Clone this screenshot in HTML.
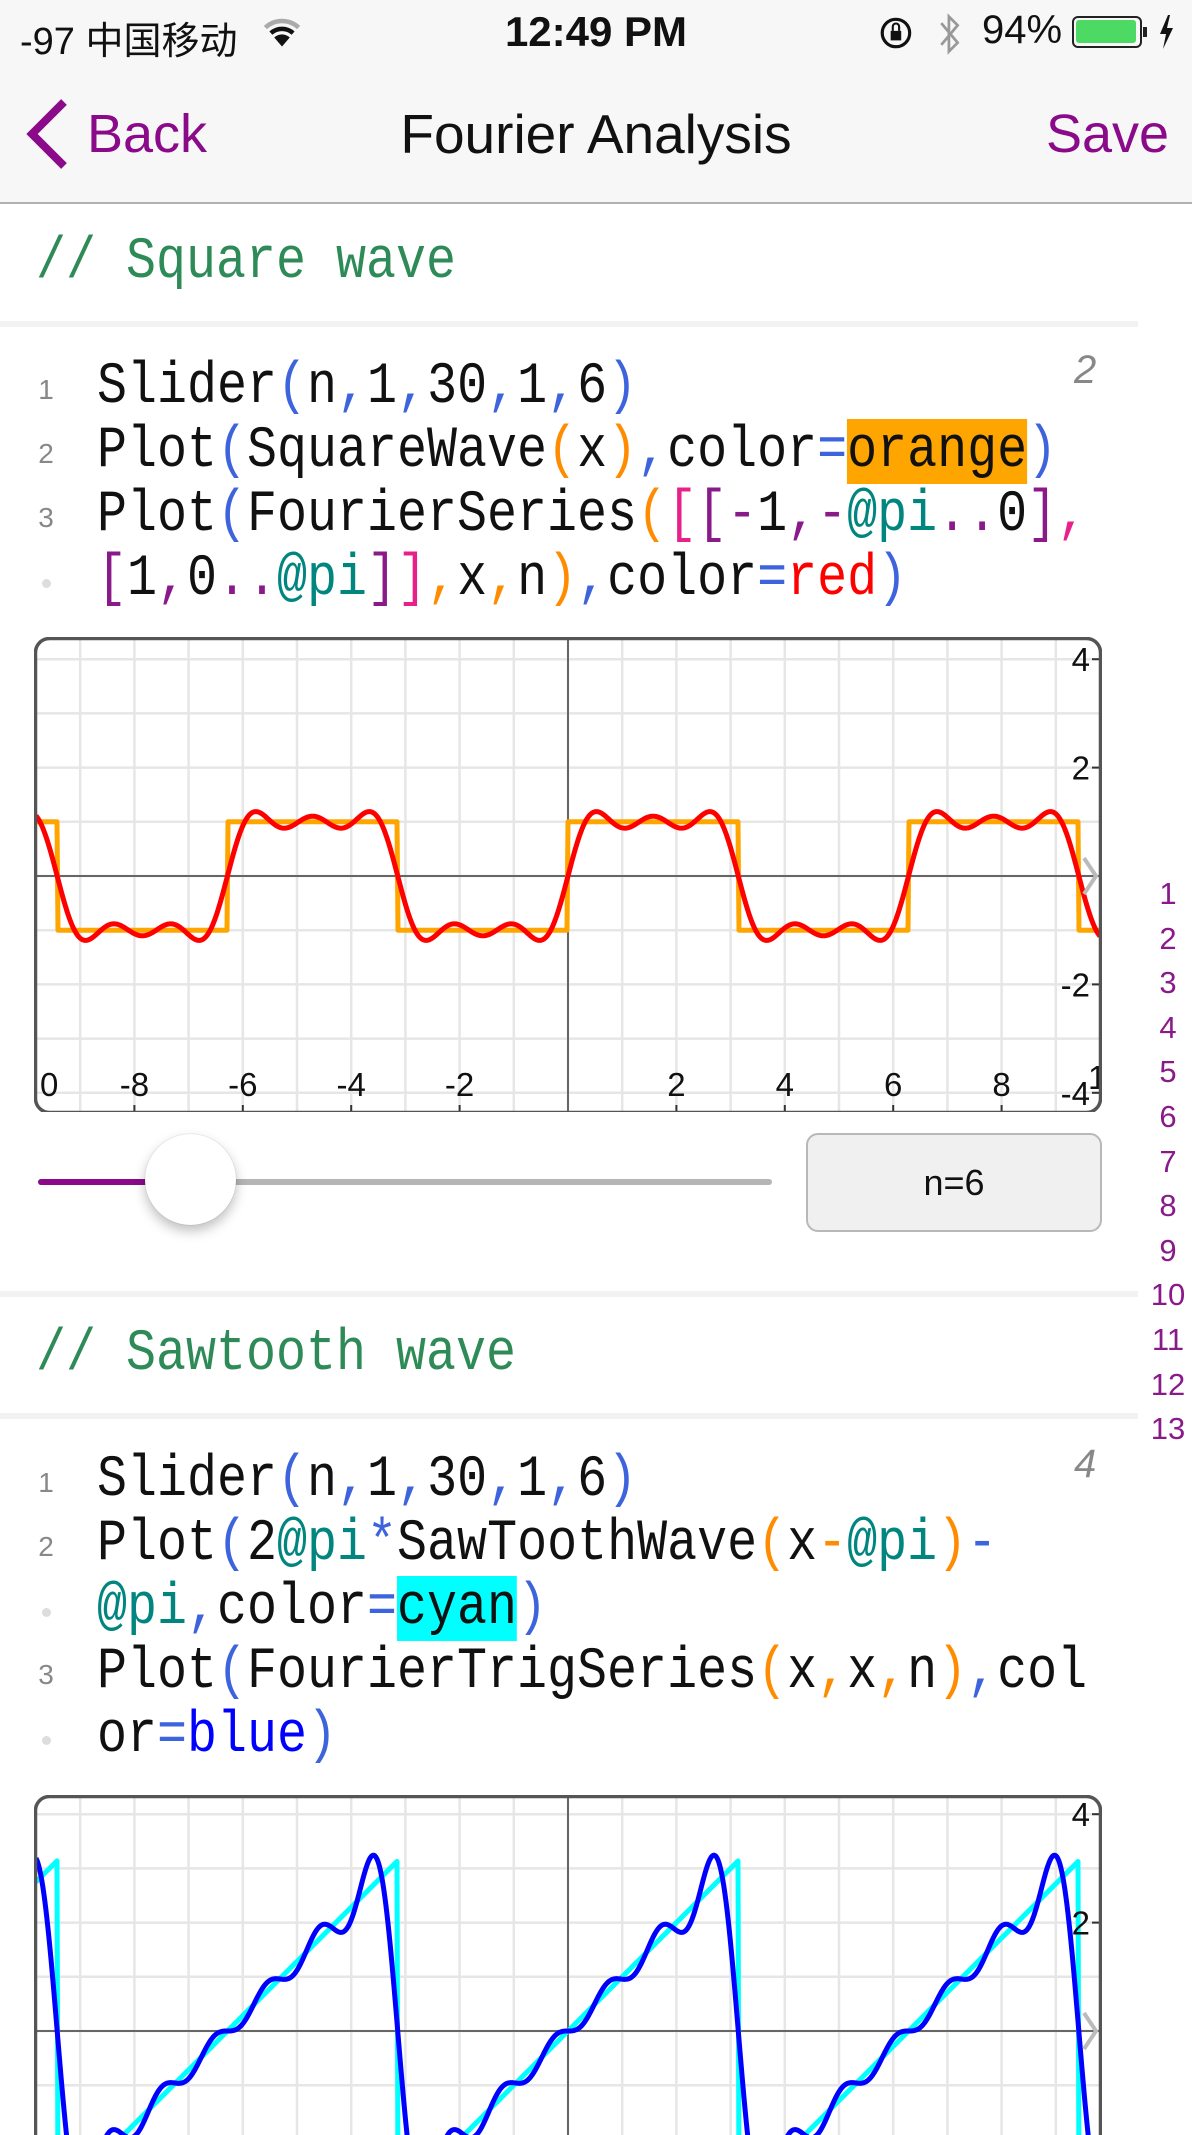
<!DOCTYPE html>
<html><head><meta charset="utf-8">
<style>
*{margin:0;padding:0;box-sizing:border-box}
body{width:1192px;height:2120px;overflow:hidden;background:#fff;position:relative;font-family:"Liberation Sans","Noto Sans CJK SC",sans-serif}
.abs{position:absolute}
.nav{position:absolute;left:0;top:0;width:1192px;height:204px;background:#f7f7f7;border-bottom:2px solid #b2b2b2}
.code{position:absolute;left:97px;font-family:"Liberation Mono",monospace;font-size:58px;line-height:64px;white-space:pre;color:#111;transform:scaleX(0.862);transform-origin:0 0}
.ln{position:absolute;left:36px;font-size:28px;color:#888;width:20px;text-align:center}
.dot{position:absolute;left:42px;width:9px;height:9px;border-radius:50%;background:#ddd}
.b{color:#3d64dc}.o{color:#ff8c00}.m{color:#e8208a}.p{color:#8a1a8a}.t{color:#00857f}.r{color:#ff0000}.bl{color:#0000ff}
.comment{position:absolute;left:36px;font-family:"Liberation Mono",monospace;font-size:58px;color:#2e8b57;white-space:pre;transform:scaleX(0.862);transform-origin:0 0}
.sep{position:absolute;left:0;width:1138px;height:6px;background:#f2f2f2}
.cellno{position:absolute;left:1074px;font-size:40px;font-style:italic;color:#888}
.side{position:absolute;left:1146px;width:44px;text-align:center;color:#8a1a8a;font-size:31px;line-height:44.6px}
</style></head><body>
<div class="nav">
 <div class="abs" style="left:20px;top:10px;font-size:38px;color:#111">-97 中国移动</div>
 <svg class="abs" style="left:262px;top:16px" width="40" height="32" viewBox="0 0 36 28"><path d="M3 10 A22 22 0 0 1 33 10" stroke="#aaa" stroke-width="4" fill="none"/><path d="M8 15 A15 15 0 0 1 28 15" stroke="#111" stroke-width="4" fill="none"/><path d="M18 27 L11 19 A10 10 0 0 1 25 19 Z" fill="#111"/></svg>
 <div class="abs" style="left:0;width:1192px;top:8px;text-align:center;font-size:42px;font-weight:bold;color:#111">12:49 PM</div>
 <svg class="abs" style="left:878px;top:14px" width="38" height="38" viewBox="0 0 36 34"><circle cx="17" cy="17" r="13" fill="none" stroke="#111" stroke-width="3"/><rect x="12" y="15" width="10" height="9" fill="#111"/><path d="M14 15 v-4 a3 3 0 0 1 6 0 v4" fill="none" stroke="#111" stroke-width="2"/></svg>
 <svg class="abs" style="left:938px;top:10px" width="24" height="48" viewBox="0 0 22 44"><path d="M3 12 L18 30 L10 38 V6 L18 14 L3 32" fill="none" stroke="#999" stroke-width="2.5"/></svg>
 <div class="abs" style="left:982px;top:8px;font-size:40px;color:#111">94%</div>
 <div class="abs" style="left:1072px;top:16px;width:70px;height:32px;border:2.5px solid #222;border-radius:6px;padding:2px"><div style="width:60px;height:23px;background:#4cd964;border-radius:3px"></div></div>
 <div class="abs" style="left:1143px;top:27px;width:4px;height:10px;background:#222"></div>
 <svg class="abs" style="left:1158px;top:14px" width="16" height="36" viewBox="0 0 16 34"><path d="M10 0 L2 19 H8 L5 34 L15 13 H9 L12 0 Z" fill="#111"/></svg>
 <svg class="abs" style="left:24px;top:98px" width="46" height="72" viewBox="0 0 46 72"><path d="M40 4 L8 36 L40 68" fill="none" stroke="#8a0a8a" stroke-width="8"/></svg>
 <div class="abs" style="left:87px;top:103px;font-size:54px;color:#8a0a8a">Back</div>
 <div class="abs" style="left:0;width:1192px;top:102px;text-align:center;font-size:55px;color:#111">Fourier Analysis</div>
 <div class="abs" style="left:1046px;top:103px;font-size:54px;color:#8a0a8a">Save</div>
</div>

<div class="comment" style="top:230px">// Square wave</div>
<div class="sep" style="top:321px"></div>
<div class="cellno" style="top:348px">2</div>
<div class="ln" style="top:374px">1</div><div class="ln" style="top:438px">2</div><div class="ln" style="top:502px">3</div><div class="dot" style="top:579px"></div>
<div class="code" style="top:356px">Slider<span class="b">(</span>n<span class="b">,</span>1<span class="b">,</span>30<span class="b">,</span>1<span class="b">,</span>6<span class="b">)</span>
Plot<span class="b">(</span>SquareWave<span class="o">(</span>x<span class="o">)</span><span class="b">,</span>color<span class="b">=</span><span style="background:#ffa500">orange</span><span class="b">)</span>
Plot<span class="b">(</span>FourierSeries<span class="o">(</span><span class="m">[</span><span class="p">[-</span>1<span class="p">,-</span><span class="t">@pi</span><span class="p">..</span>0<span class="p">]</span><span class="m">,</span>
<span class="p">[</span>1<span class="p">,</span>0<span class="p">..</span><span class="t">@pi</span><span class="p">]</span><span class="m">]</span><span class="o">,</span>x<span class="o">,</span>n<span class="o">)</span><span class="b">,</span>color<span class="b">=</span><span class="r">red</span><span class="b">)</span></div>

<svg class="abs" id="g1" style="left:34px;top:637px" width="1068" height="475"></svg>

<div class="abs" style="left:38px;top:1179px;width:734px;height:6px;background:#b5b5b5;border-radius:3px"></div>
<div class="abs" style="left:38px;top:1179px;width:120px;height:6px;background:#8a0a8a;border-radius:3px"></div>
<div class="abs" style="left:145px;top:1134px;width:91px;height:91px;border-radius:50%;background:#fff;box-shadow:0 6px 12px rgba(0,0,0,.25),0 0 1px rgba(0,0,0,.3)"></div>
<div class="abs" style="left:806px;top:1133px;width:296px;height:99px;border:2px solid #b8b8b8;border-radius:12px;background:#f0f0f0;text-align:center;line-height:95px;font-size:36px;color:#111">n=6</div>

<div class="sep" style="top:1291px"></div>
<div class="comment" style="top:1322px">// Sawtooth wave</div>
<div class="sep" style="top:1413px"></div>
<div class="cellno" style="top:1442px">4</div>
<div class="ln" style="top:1467px">1</div><div class="ln" style="top:1531px">2</div><div class="dot" style="top:1608px"></div><div class="ln" style="top:1659px">3</div><div class="dot" style="top:1736px"></div>
<div class="code" style="top:1449px">Slider<span class="b">(</span>n<span class="b">,</span>1<span class="b">,</span>30<span class="b">,</span>1<span class="b">,</span>6<span class="b">)</span>
Plot<span class="b">(</span>2<span class="t">@pi</span><span class="b">*</span>SawToothWave<span class="o">(</span>x<span class="o">-</span><span class="t">@pi</span><span class="o">)</span><span class="b">-</span>
<span class="t">@pi</span><span class="b">,</span>color<span class="b">=</span><span style="background:#00ffff">cyan</span><span class="b">)</span>
Plot<span class="b">(</span>FourierTrigSeries<span class="o">(</span>x<span class="o">,</span>x<span class="o">,</span>n<span class="o">)</span><span class="b">,</span>col
or<span class="b">=</span><span class="bl">blue</span><span class="b">)</span></div>

<svg class="abs" id="g2" style="left:34px;top:1795px" width="1068" height="340"></svg>

<div class="side" style="top:872px">1<br>2<br>3<br>4<br>5<br>6<br>7<br>8<br>9<br>10<br>11<br>12<br>13</div>

<script>
var NS="http://www.w3.org/2000/svg";
function el(svg,tag,attrs,txt){var e=document.createElementNS(NS,tag);for(var k in attrs)e.setAttribute(k,attrs[k]);if(txt!=null)e.textContent=txt;svg.appendChild(e);return e;}
function graph(id,H,ox,oy,curves,labels){
 var s=document.getElementById(id),W=1068,U=54.2;
 el(s,"rect",{x:1.5,y:1.5,width:W-3,height:H+20,rx:14,fill:"#fff"});
 var g="";
 for(var i=-10;i<=10;i++){var x=ox+i*U;if(x>3&&x<W-3)g+="M"+x+" 0V"+(H+20);}
 for(var j=-6;j<=6;j++){var y=oy-j*U;if(y>3&&y<H+20)g+="M0 "+y+"H"+W;}
 el(s,"path",{d:g,stroke:"#e6e6e6","stroke-width":2.5,fill:"none"});
 el(s,"path",{d:"M"+ox+" 0V"+(H+20)+"M0 "+oy+"H"+W,stroke:"#666","stroke-width":2,fill:"none"});
 curves.forEach(function(c){
  var d="";for(var px=2;px<=W-2;px+=1){var xv=(px-ox)/U;var yv=c.f(xv);var py=oy-yv*U;d+=(px==2?"M":"L")+px+" "+py.toFixed(2);}
  el(s,"path",{d:d,stroke:c.c,"stroke-width":c.w,fill:"none","stroke-linejoin":"round"});
 });
 labels(s,U);
 el(s,"path",{d:"M"+(W-18)+" "+(oy-18)+"L"+(W-6)+" "+oy+"L"+(W-18)+" "+(oy+18),stroke:"#bbb","stroke-width":4,fill:"none"});
 el(s,"rect",{x:1.5,y:1.5,width:W-3,height:H+20,rx:14,fill:"none",stroke:"#555","stroke-width":3.5});
}
var PI=Math.PI;
function sq(x){var t=((x%(2*PI))+2*PI)%(2*PI);return t<PI?1:-1;}
function fs(x){var s=0;for(var k=1;k<=5;k+=2)s+=Math.sin(k*x)/k;return 4/PI*s;}
function saw(x){var t=(x-PI)/(2*PI);t=t-Math.floor(t);return 2*PI*t-PI;}
function ft(x){var s=0;for(var k=1;k<=6;k++)s+=(k%2?1:-1)*Math.sin(k*x)/k;return 2*s;}
var LF={"font-size":33,"font-family":"Liberation Sans",fill:"#111"};
function T(s,a,t){var o={};for(var k in LF)o[k]=LF[k];for(var k in a)o[k]=a[k];el(s,"text",o,t);}
graph("g1",454,534,239,[{f:sq,c:"#ffa500",w:5},{f:fs,c:"#ff0000",w:5}],function(s,U){
 var xl=[[-10,"0"],[-8,"-8"],[-6,"-6"],[-4,"-4"],[-2,"-2"],[2,"2"],[4,"4"],[6,"6"],[8,"8"]];
 xl.forEach(function(a){var x=534+a[0]*U;var tx=a[0]==-10?6:x;T(s,{x:tx,y:459,"text-anchor":a[0]==-10?"start":"middle"},a[1]);el(s,"path",{d:"M"+x+" 468V478",stroke:"#333","stroke-width":2});});
 T(s,{x:1054,y:452},"1");
 [[4,"4"],[2,"2"],[-2,"-2"],[-4,"-4"]].forEach(function(a){var y=239-a[0]*U;T(s,{x:1056,y:y+12,"text-anchor":"end"},a[1]);el(s,"path",{d:"M1058 "+y+"H1066",stroke:"#333","stroke-width":2});});
});
graph("g2",340,534,236,[{f:saw,c:"#00ffff",w:5},{f:ft,c:"#0000ff",w:5}],function(s,U){
 [[4,"4"],[2,"2"]].forEach(function(a){var y=236-a[0]*U;T(s,{x:1056,y:y+12,"text-anchor":"end"},a[1]);el(s,"path",{d:"M1058 "+y+"H1066",stroke:"#333","stroke-width":2});});
});
</script>
</body></html>
